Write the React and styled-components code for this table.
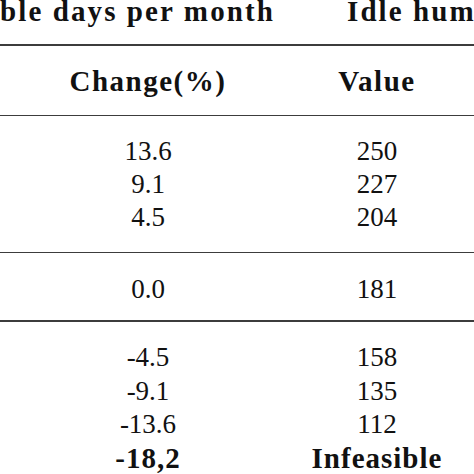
import styled, { createGlobalStyle } from 'styled-components';

const GlobalStyle = createGlobalStyle`
  html, body {
    margin: 0;
    padding: 0;
    background: #ffffff;
  }
  body {
    font-family: "Liberation Serif", "Times New Roman", serif;
    color: #111111;
  }
`;

const groups = [
  { top: 19, bottom: 17.5, lh: 33, rows: [['13.6', '250'], ['9.1', '227'], ['4.5', '204']] },
  { top: 20, bottom: 14, lh: 33, rows: [['0.0', '181']] },
  {
    top: 19.5,
    bottom: 0,
    lh: 33.6,
    rows: [['-4.5', '158'], ['-9.1', '135'], ['-13.6', '112'], ['-18,2', 'Infeasible', true]],
  },
];

export default function App() {
  return (
    <>
      <GlobalStyle />
      <Table>
        <TopHeader>
          <TopCell>ble days per month</TopCell>
          <TopCell>Idle hum</TopCell>
        </TopHeader>
        <Rule />
        <HeadRow>
          <HeadCell>Change(%)</HeadCell>
          <HeadCell>Value</HeadCell>
        </HeadRow>
        <Rule />
        {groups.map((g, gi) => (
          <div key={gi}>
            <Group $top={g.top} $bottom={g.bottom}>
              {g.rows.map(([a, b, bold]) => (
                <DataRow key={a} $lh={g.lh}>
                  <Cell $bold={bold}>{a}</Cell>
                  <Cell $bold={bold}>{b}</Cell>
                </DataRow>
              ))}
            </Group>
            {gi < groups.length - 1 && <Rule />}
          </div>
        ))}
      </Table>
    </>
  );
}

const Table = styled.div`
  width: 474px;
  height: 474px;
  overflow: hidden;
  display: flex;
  flex-direction: column;
`;

const Rule = styled.div`
  height: 1.5px;
  background: #3c3c3c;
  flex-shrink: 0;
`;

const TopHeader = styled.div`
  display: grid;
  grid-template-columns: 347px 127px;
  padding: 0 0 22px;
  line-height: 22px;
  white-space: nowrap;
`;

const TopCell = styled.span`
  font-size: 29px;
  font-weight: 700;
  letter-spacing: 2.1px;
`;

const HeadRow = styled.div`
  display: grid;
  grid-template-columns: 296px 162px;
  padding: 19.5px 0 16.5px;
  line-height: 33px;
`;

const HeadCell = styled.span`
  text-align: center;
  font-size: 29px;
  font-weight: 700;
  letter-spacing: 1.5px;
`;

const Group = styled.div`
  padding: ${p => p.$top}px 0 ${p => p.$bottom}px;
`;

const DataRow = styled.div`
  display: grid;
  grid-template-columns: 296px 162px;
  line-height: ${p => p.$lh}px;
`;

const Cell = styled.span`
  text-align: center;
  font-size: ${p => (p.$bold ? 29 : 27)}px;
  font-weight: ${p => (p.$bold ? 700 : 400)};
  letter-spacing: ${p => (p.$bold ? 1 : 0)}px;
`;
